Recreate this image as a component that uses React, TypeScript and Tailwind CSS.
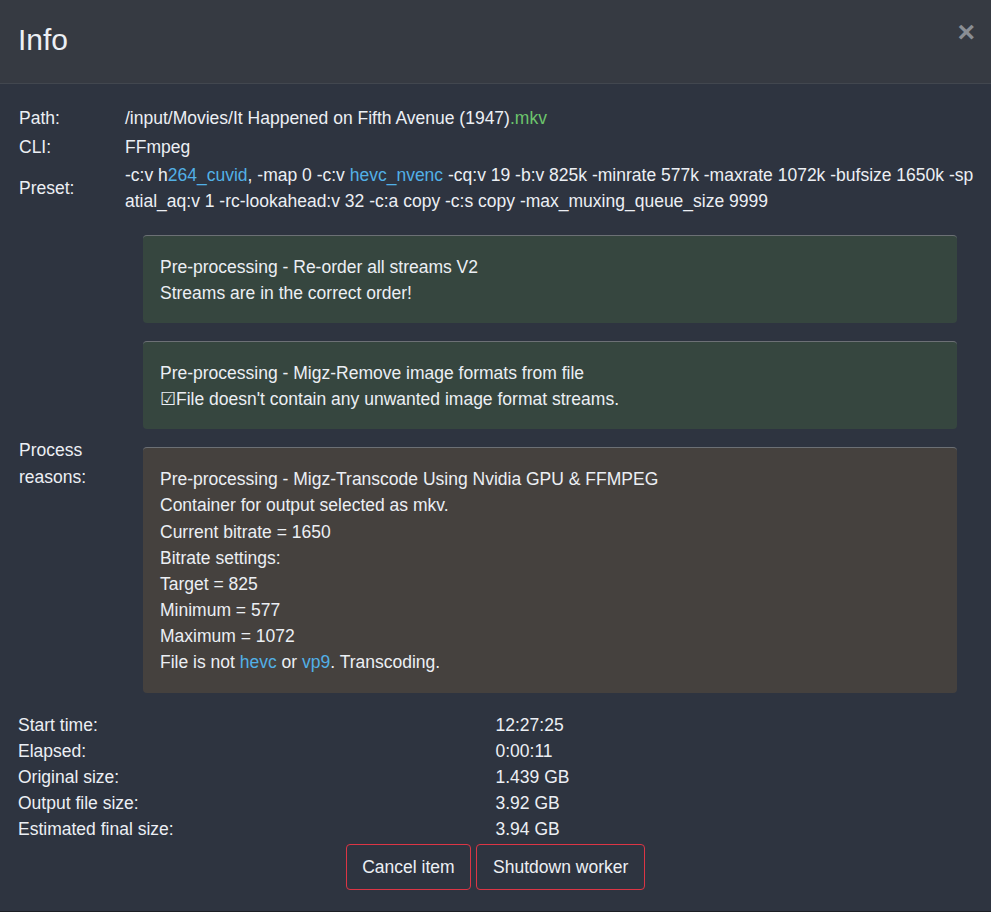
import React from 'react';

const font = { fontFamily: '"Liberation Sans", Arial, sans-serif' };

const stats: [string, string][] = [
  ['Start time:', '12:27:25'],
  ['Elapsed:', '0:00:11'],
  ['Original size:', '1.439 GB'],
  ['Output file size:', '3.92 GB'],
  ['Estimated final size:', '3.94 GB'],
];

function Blue({ children }: { children: React.ReactNode }) {
  return <span className="text-[#52b0e6]">{children}</span>;
}

export default function App() {
  return (
    <div className="min-h-screen bg-[#2e3440] text-[#eceff4] text-[17.5px] leading-[26.15px]" style={font}>
      <div className="border-b border-[#1c1f24]">
        {/* Header */}
        <div className="h-[84px] bg-[#363a42] border-b border-[#42474f] flex justify-between pl-[18px] pr-[16px]">
          <h5 className="text-[30px] leading-[36px] mt-[22px] text-[#eceff4]">Info</h5>
          <button className="text-[#8a8e94] text-[30px] font-bold leading-none h-[30px] mt-[17px]">×</button>
        </div>

        {/* Body */}
        <div className="px-[16px] pt-[21px] pb-[21px]">
          <div className="grid grid-cols-[109px_1fr]">
            <div className="pl-[3px]">Path:</div>
            <div>
              /input/Movies/It Happened on Fifth Avenue (1947)<span className="text-[#6cc46c]">.mkv</span>
            </div>

            <div className="pl-[3px] mt-[3px]">CLI:</div>
            <div className="mt-[3px]">FFmpeg</div>

            <div className="pl-[3px] mt-[2px] self-center">Preset:</div>
            <div className="mt-[2px] break-all">
              -c:v h<Blue>264_cuvid</Blue>, -map 0 -c:v <Blue>hevc_nvenc</Blue> -cq:v 19 -b:v 825k -minrate 577k -maxrate 1072k -bufsize 1650k -spatial_aq:v 1 -rc-lookahead:v 32 -c:a copy -c:s copy -max_muxing_queue_size 9999
            </div>

            <div className="pl-[3px] self-center mt-[20px]">Process reasons:</div>
            <div className="mt-[20px] mx-[18px] flex flex-col gap-[18px]">
              <div className="bg-[#36463f] border-t border-[#6c7075] rounded-[4px] pt-[18px] pb-[17px] px-[17px]">
                <div>Pre-processing - Re-order all streams V2</div>
                <div>Streams are in the correct order!</div>
              </div>
              <div className="bg-[#36463f] border-t border-[#6c7075] rounded-[4px] pt-[18px] pb-[17px] px-[17px]">
                <div>Pre-processing - Migz-Remove image formats from file</div>
                <div>☑File doesn't contain any unwanted image format streams.</div>
              </div>
              <div className="bg-[#45413e] border-t border-[#6c7075] rounded-[4px] pt-[18px] pb-[17px] px-[17px]">
                <div>Pre-processing - Migz-Transcode Using Nvidia GPU &amp; FFMPEG</div>
                <div>Container for output selected as mkv.</div>
                <div>Current bitrate = 1650</div>
                <div>Bitrate settings:</div>
                <div>Target = 825</div>
                <div>Minimum = 577</div>
                <div>Maximum = 1072</div>
                <div>
                  File is not <Blue>hevc</Blue> or <Blue>vp9</Blue>. Transcoding.
                </div>
              </div>
            </div>
          </div>

          {/* Stats */}
          <div className="grid grid-cols-2 mt-[19px]">
            {stats.map(([k, v]) => (
              <React.Fragment key={k}>
                <div className="pl-[2px]">{k}</div>
                <div>{v}</div>
              </React.Fragment>
            ))}
          </div>

          <div className="flex justify-center gap-[5px] mt-[2px]">
            <button className="border border-[#dc3545] rounded-[4px] px-[15.5px] py-[9px]">Cancel item</button>
            <button className="border border-[#dc3545] rounded-[4px] px-[16px] py-[9px]">Shutdown worker</button>
          </div>
        </div>
      </div>
    </div>
  );
}
